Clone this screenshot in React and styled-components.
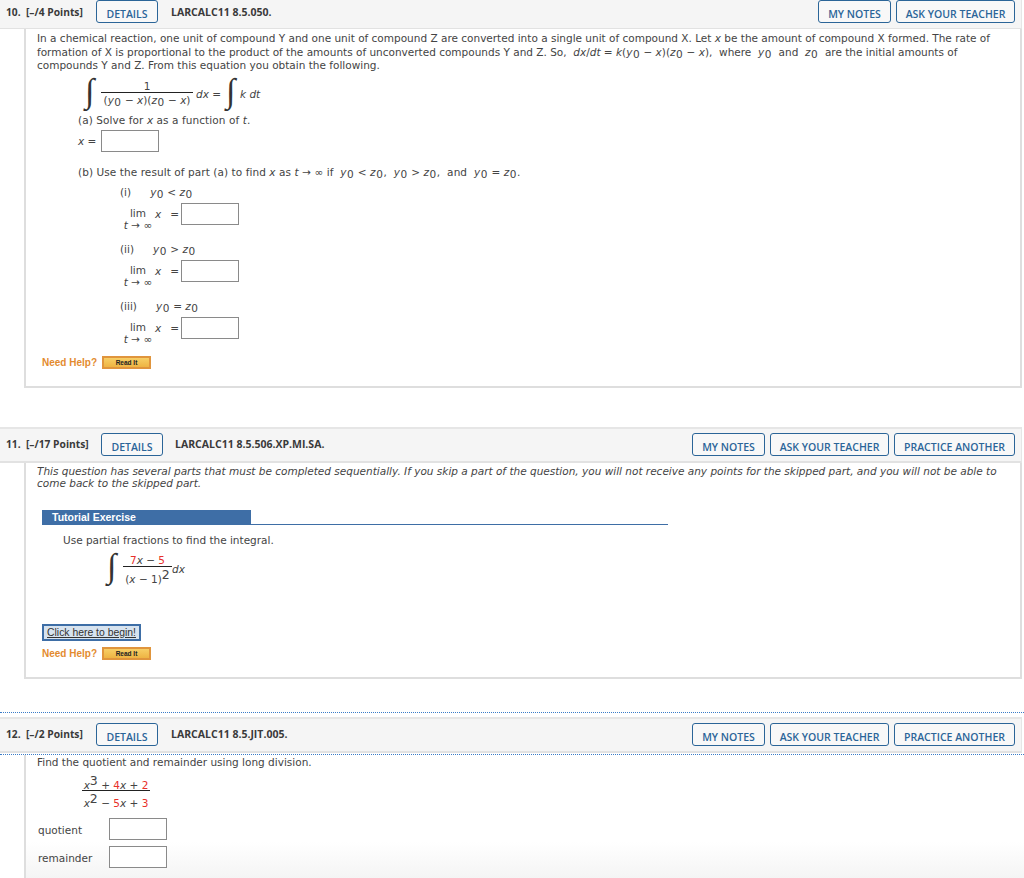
import React from "react";
import styled, { createGlobalStyle } from "styled-components";

const Global = createGlobalStyle`
  html, body { margin: 0; padding: 0; background: #fff; }
  body { font-family: "DejaVu Sans", Verdana, sans-serif; color: #444; }
`;

const Page = styled.div`
  width: 1024px;
  height: 878px;
  overflow: hidden;
`;
const Question = styled.section`
  width: 1022px;
  margin-top: ${(p) => p.$mt || 0}px;
`;
const DottedSection = styled.section`
  width: 1024px;
  margin-top: ${(p) => p.$mt || 0}px;
  border-top: 1px dotted #3a7cc8;
  padding-top: 4px;
`;
const Divider = styled.div`
  margin-top: 1px;
  border-top: 1px dotted #3a7cc8;
`;
const Header = styled.header`
  width: 1022px;
  box-sizing: border-box;
  display: flex;
  align-items: center;
  background: #f5f5f5;
  padding: ${(p) => (p.$flush ? 0 : 4)}px 6px 5px 6px;
  border-top: ${(p) => (p.$flush ? 0 : 2)}px solid #e6e6e6;
  border-bottom: ${(p) => (p.$flush ? 1 : 2)}px solid #e2e2e2;
  border-right: 1px solid #e6e6e6;
  font-family: "Open Sans", sans-serif;
`;
const Points = styled.span`
  font-size: 10.25px;
  font-weight: 700;
  color: #3a3a3a;
  white-space: pre;
  width: ${(p) => p.$w}px;
  flex: none;
`;
const Code = styled.span`
  font-size: 10.5px;
  font-weight: 700;
  color: #3a3a3a;
  margin-left: ${(p) => p.$ml || 12}px;
`;
const Actions = styled.div`
  margin-left: auto;
  display: flex;
  gap: 5px;
`;
const HeadButton = styled.button`
  width: ${(p) => p.$w}px;
  height: 23px;
  box-sizing: border-box;
  background: #f8f8f8;
  border: 1px solid #2b6598;
  border-radius: 3px;
  padding: 5px 0 0;
  font-family: "Open Sans", sans-serif;
  font-size: 10.5px;
  font-weight: 600;
  color: #2b6598;
  text-align: center;
  white-space: nowrap;
`;
const Body = styled.div`
  margin-left: 24px;
  box-sizing: border-box;
  border-left: 2px solid #dedede;
  border-right: ${(p) => (p.$open ? 0 : 2)}px solid #dedede;
  border-bottom: ${(p) => (p.$open ? 0 : 2)}px solid #dedede;
  padding: ${(p) => p.$pt}px 0 ${(p) => p.$pb}px 11px;
  font-size: 10.5px;
  ${(p) => p.$open && `height: 124px; background: linear-gradient(#fff 70%, #f4f4f4);`}
`;
const Para = styled.p`
  margin: 0;
  width: 965px;
  line-height: ${(p) => p.$lh || 13.5}px;
  font-style: ${(p) => (p.$italic ? "italic" : "normal")};
`;
const Line = styled.div`
  display: flex;
  align-items: center;
  height: ${(p) => p.$h || 14}px;
  margin-top: ${(p) => p.$mt || 0}px;
  margin-left: ${(p) => p.$ml || 0}px;
  letter-spacing: ${(p) => p.$ls || 0}px;
  white-space: pre;
`;
const I = styled.i`
  font-style: italic;
`;
const Sub = styled.span`
  font-style: normal;
  margin: 0 0.5px;
  vertical-align: -2px;
  line-height: 0;
`;
const Sup = styled.span`
  font-style: normal;
  font-size: 12.5px;
  vertical-align: 4px;
  line-height: 0;
`;
const Red = styled.span`
  color: #e8302a;
`;
const IntegralSign = styled.span`
  font-family: "Liberation Serif", serif;
  font-size: 34px;
  line-height: 34px;
  color: #333;
  font-style: italic;
  width: ${(p) => p.$w || 16}px;
  margin-bottom: 6px;
  flex: none;
`;
const Fraction = styled.span`
  display: inline-flex;
  flex-direction: column;
  align-items: center;
  align-self: ${(p) => (p.$top ? "flex-start" : "auto")};
  width: ${(p) => p.$w}px;
  flex: none;
  font-size: 10.5px;
`;
const Num = styled.span`
  height: ${(p) => p.$h || 12}px;
  line-height: ${(p) => p.$lh || p.$h || 12}px;
  width: 100%;
  text-align: center;
  border-bottom: 1px solid #222;
`;
const Den = styled.span`
  height: ${(p) => p.$h || 14}px;
  line-height: ${(p) => p.$h || 14}px;
  text-align: center;
`;
const MathText = styled.span`
  display: inline-flex;
  align-items: center;
  margin-left: ${(p) => p.$ml || 0}px;
`;
const InputBox = styled.span`
  display: block;
  flex: none;
  box-sizing: border-box;
  width: 58px;
  height: 22px;
  margin-left: ${(p) => p.$ml || 0}px;
  background: #fff;
  border: 1px solid #8a8a8a;
`;
const LimRow = styled.div`
  display: flex;
  align-items: flex-start;
  height: 24px;
  margin-top: 4px;
  margin-left: 85px;
`;
const Lim = styled.span`
  display: flex;
  flex-direction: column;
  align-items: center;
  width: 32px;
  flex: none;
  padding-top: 4px;
  font-size: 10.5px;
  line-height: 12px;
`;
const LimEquals = styled.span`
  display: flex;
  align-items: center;
  gap: 9px;
  margin-left: 1px;
  width: 26px;
  height: 22px;
  flex: none;
`;
const Help = styled.div`
  display: flex;
  align-items: center;
  height: 14px;
  margin-top: ${(p) => p.$mt}px;
  margin-left: 5px;
  gap: 5px;
`;
const HelpLabel = styled.span`
  font-family: "Liberation Sans", sans-serif;
  font-weight: 700;
  font-size: 10px;
  color: #e38b2f;
`;
const ReadIt = styled.span`
  display: block;
  width: 49px;
  height: 13px;
  box-sizing: border-box;
  border: 2px solid #e0953d;
  background: linear-gradient(#f7cf66, #eeb443);
  font-family: "Liberation Sans", sans-serif;
  font-weight: 700;
  font-size: 6.5px;
  line-height: 9px;
  text-align: center;
  color: #222;
`;
const TutorialBar = styled.div`
  width: 626px;
  margin: 21px 0 0 5px;
  border-bottom: 1px solid #3e6ea6;
`;
const TutorialLabel = styled.div`
  width: 199px;
  height: 14px;
  padding-left: 10px;
  background: #3e6ea6;
  color: #fff;
  font-family: "Liberation Sans", sans-serif;
  font-weight: 700;
  font-size: 10.5px;
  line-height: 15px;
`;
const BeginButton = styled.a`
  display: block;
  width: 99px;
  height: 17px;
  box-sizing: border-box;
  margin: 37px 0 0 5px;
  background: #d7e3ef;
  border: 2px solid #3e6ea6;
  color: #333;
  font-family: "Liberation Sans", sans-serif;
  font-size: 10.4px;
  line-height: 13px;
  text-align: center;
  text-decoration: underline;
`;
const Entry = styled.div`
  display: grid;
  grid-template-columns: 71px 58px;
  align-items: center;
  height: 22px;
  margin-top: ${(p) => p.$mt}px;
  margin-left: 1px;
`;
const EntryLabel = styled.span`
  padding-top: 2px;
`;

const Y0 = () => (
  <>
    <I>y</I>
    <Sub>0</Sub>
  </>
);
const Z0 = () => (
  <>
    <I>z</I>
    <Sub>0</Sub>
  </>
);

const Limit = ({ label, condition, mt }) => (
  <>
    <Line $mt={mt} $ml={83}>
      <span>{label}</span>
      <MathText $ml={19}>
        <span>{condition}</span>
      </MathText>
    </Line>
    <LimRow>
      <Lim>
        <span>lim</span>
        <span>
          <I>t</I> → ∞
        </span>
      </Lim>
      <LimEquals>
        <I>x</I>
        <span>=</span>
      </LimEquals>
      <InputBox />
    </LimRow>
  </>
);

export default function App() {
  return (
    <Page>
      <Global />
      <Question>
        <Header $flush>
          <Points $w={90}>10.  [–/4 Points]</Points>
          <HeadButton $w={62}>DETAILS</HeadButton>
          <Code $ml={13}>LARCALC11 8.5.050.</Code>
          <Actions>
            <HeadButton $w={73}>MY NOTES</HeadButton>
            <HeadButton $w={119}>ASK YOUR TEACHER</HeadButton>
          </Actions>
        </Header>
        <Body $pt={3} $pb={16}>
          <Para>
            In a chemical reaction, one unit of compound Y and one unit of compound Z are converted into a single unit of compound X. Let <I>x</I> be the amount of compound X formed. The rate of formation of X is proportional to the product of the amounts of unconverted compounds Y and Z. So,&nbsp; <I>dx</I>/<I>dt</I> = <I>k</I>(<Y0 /> − <I>x</I>)(<Z0 /> − <I>x</I>),&nbsp; where&nbsp; <Y0 />&nbsp; and&nbsp; <Z0 />&nbsp; are the initial amounts of compounds Y and Z. From this equation you obtain the following.
          </Para>
          <Line $h={34} $mt={4} $ml={48}>
            <IntegralSign>∫</IntegralSign>
            <Fraction $w={92}>
              <Num>1</Num>
              <Den>
                (<Y0 /> − <I>x</I>)(<Z0 /> − <I>x</I>)
              </Den>
            </Fraction>
            <MathText $ml={3}>
              <I>dx</I> =
            </MathText>
            <MathText $ml={5}>
              <IntegralSign $w={14}>∫</IntegralSign>
            </MathText>
            <MathText>
              <I>k dt</I>
            </MathText>
          </Line>
          <Line $mt={2} $ml={41} $ls={0.08}>
            <span>
              (a) Solve for <I>x</I> as a function of <I>t</I>.
            </span>
          </Line>
          <Line $h={22} $mt={3} $ml={41}>
            <I>x</I> =<InputBox $ml={5} />
          </Line>
          <Line $mt={13} $ml={41} $ls={0.08}>
            <span>
              (b) Use the result of part (a) to find <I>x</I> as <I>t</I> → ∞ if&nbsp; <Y0 /> &lt; <Z0 />,&nbsp; <Y0 /> &gt; <Z0 />,&nbsp; and&nbsp; <Y0 /> = <Z0 />.
            </span>
          </Line>
          <Limit
            label="(i)"
            mt={6}
            condition={
              <>
                <Y0 /> &lt; <Z0 />
              </>
            }
          />
          <Limit
            label="(ii)"
            mt={15}
            condition={
              <>
                <Y0 /> &gt; <Z0 />
              </>
            }
          />
          <Limit
            label="(iii)"
            mt={15}
            condition={
              <>
                <Y0 /> = <Z0 />
              </>
            }
          />
          <Help $mt={15}>
            <HelpLabel>Need Help?</HelpLabel>
            <ReadIt>Read It</ReadIt>
          </Help>
        </Body>
      </Question>

      <Question $mt={39}>
        <Header>
          <Points $w={95}>11.  [–/17 Points]</Points>
          <HeadButton $w={62}>DETAILS</HeadButton>
          <Code>LARCALC11 8.5.506.XP.MI.SA.</Code>
          <Actions>
            <HeadButton $w={73}>MY NOTES</HeadButton>
            <HeadButton $w={119}>ASK YOUR TEACHER</HeadButton>
            <HeadButton $w={121}>PRACTICE ANOTHER</HeadButton>
          </Actions>
        </Header>
        <Body $pt={2} $pb={16}>
          <Para $italic $lh={12}>
            This question has several parts that must be completed sequentially. If you skip a part of the question, you will not receive any points for the skipped part, and you will not be able to come back to the skipped part.
          </Para>
          <TutorialBar>
            <TutorialLabel>Tutorial Exercise</TutorialLabel>
          </TutorialBar>
          <Line $mt={8} $ml={26}>
            <span>Use partial fractions to find the integral.</span>
          </Line>
          <Line $h={35} $mt={5} $ml={70}>
            <IntegralSign>∫</IntegralSign>
            <Fraction $w={49} $top>
              <Num $h={14} $lh={17}>
                <Red>7</Red>
                <I>x</I> − <Red>5</Red>
              </Num>
              <Den $h={24}>
                (<I>x</I> − 1)<Sup>2</Sup>
              </Den>
            </Fraction>
            <I>dx</I>
          </Line>
          <BeginButton>Click here to begin!</BeginButton>
          <Help $mt={6}>
            <HelpLabel>Need Help?</HelpLabel>
            <ReadIt>Read It</ReadIt>
          </Help>
        </Body>
      </Question>

      <DottedSection $mt={33}>
        <Header>
          <Points $w={90}>12.  [–/2 Points]</Points>
          <HeadButton $w={62}>DETAILS</HeadButton>
          <Code $ml={13}>LARCALC11 8.5.JIT.005.</Code>
          <Actions>
            <HeadButton $w={73}>MY NOTES</HeadButton>
            <HeadButton $w={119}>ASK YOUR TEACHER</HeadButton>
            <HeadButton $w={121}>PRACTICE ANOTHER</HeadButton>
          </Actions>
        </Header>
        <Divider />
        <Body $open $pt={1} $pb={0}>
          <Para $lh={12}>Find the quotient and remainder using long division.</Para>
          <Line $h={40} $mt={7} $ml={45}>
            <Fraction $w={68}>
              <Num $h={15} $lh={21}>
                <I>x</I>
                <Sup>3</Sup> + <Red>4</Red>
                <I>x</I> + <Red>2</Red>
              </Num>
              <Den $h={24}>
                <I>x</I>
                <Sup>2</Sup> − <Red>5</Red>
                <I>x</I> + <Red>3</Red>
              </Den>
            </Fraction>
          </Line>
          <Entry $mt={3}>
            <EntryLabel>quotient</EntryLabel>
            <InputBox />
          </Entry>
          <Entry $mt={6}>
            <EntryLabel>remainder</EntryLabel>
            <InputBox />
          </Entry>
        </Body>
      </DottedSection>
    </Page>
  );
}
